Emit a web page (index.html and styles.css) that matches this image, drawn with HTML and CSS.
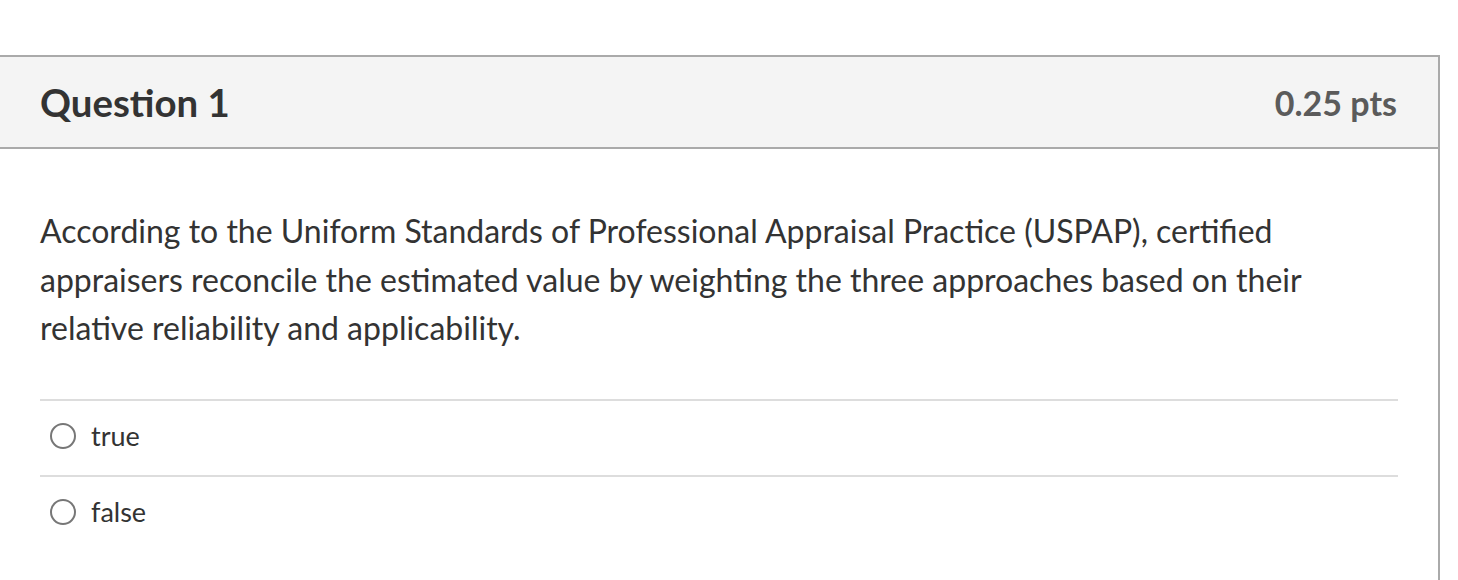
FILE: index.html
```html
<!DOCTYPE html>
<html>
<head>
<meta charset="utf-8">
<link rel="stylesheet" href="styles.css">
</head>
<body>
<div class="question">
  <div class="q-header">
    <h2 class="q-title">Question 1</h2>
    <span class="q-points">0.25 pts</span>
  </div>
  <div class="q-body">
    <p class="q-text">According to the Uniform Standards of Professional Appraisal Practice (USPAP), certified appraisers reconcile the estimated value by weighting the three approaches based on their relative reliability and applicability.</p>
    <div class="answers">
      <label class="answer"><span class="radio"></span><span class="answer-label">true</span></label>
      <label class="answer"><span class="radio"></span><span class="answer-label">false</span></label>
    </div>
  </div>
</div>
</body>
</html>
```
FILE: styles.css
```css
html, body {
  margin: 0;
  padding: 0;
  background: #ffffff;
}
body {
  font-family: Lato, "Open Sans", sans-serif;
  color: #333333;
  overflow: hidden;
}
.question {
  margin-top: 55px;
  width: 1438px;
  height: 523px;
  border: 2px solid #aaaaaa;
  border-left: none;
  border-bottom: none;
}
.q-header {
  display: flex;
  align-items: center;
  justify-content: space-between;
  height: 90px;
  padding: 0 41px 0 40px;
  background: #f4f4f4;
  border-bottom: 2px solid #aaaaaa;
}
.q-title {
  margin: 0;
  font-size: 38.4px;
  font-weight: 700;
  color: #333333;
}
.q-points {
  font-size: 34px;
  font-weight: 700;
  color: #5b5b5b;
}
.q-body {
  padding: 0 40px;
}
.q-text {
  margin: 0;
  padding-top: 58px;
  font-size: 32px;
  line-height: 48.5px;
  color: #333333;
}
.answers {
  margin-top: 46px;
}
.answer {
  display: flex;
  align-items: center;
  height: 70px;
  padding: 0 0 4px 10px;
  border-top: 2px solid #dddddd;
}
.radio {
  width: 22px;
  height: 22px;
  border: 2px solid #777777;
  border-radius: 50%;
  flex: none;
}
.answer-label {
  margin-left: 15px;
  font-size: 27px;
  color: #333333;
}
```
